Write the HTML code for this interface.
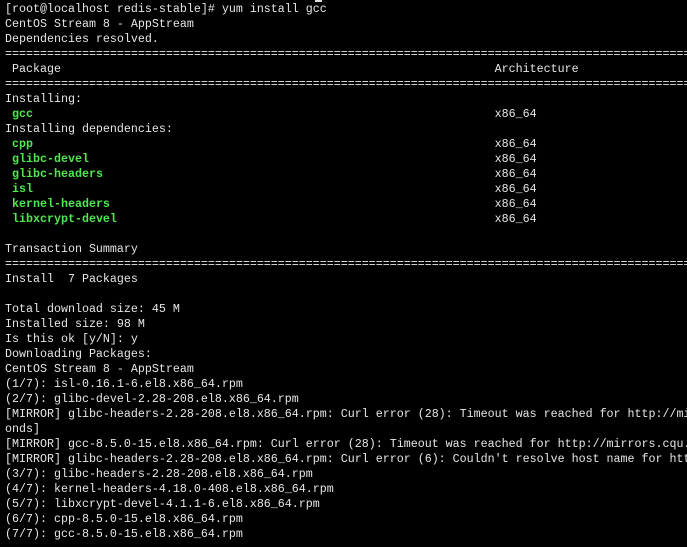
<!DOCTYPE html>
<html><head><style>
html,body{margin:0;padding:0;background:#000;width:687px;height:547px;overflow:hidden}
pre{margin:0;padding:2px 0 0 5px;font-family:"Liberation Mono",monospace;font-size:11.67px;line-height:15px;color:#e6e6e6;white-space:pre}
b{color:#4fe84f;font-weight:bold}
.c{position:absolute;left:315px;top:0;width:7px;height:2px;background:#ddd}
</style></head><body>
<pre>[root@localhost redis-stable]# yum install gcc
CentOS Stream 8 - AppStream
Dependencies resolved.
==================================================================================================
 Package                                                              Architecture
==================================================================================================
Installing:
 <b>gcc</b>                                                                  x86_64
Installing dependencies:
 <b>cpp</b>                                                                  x86_64
 <b>glibc-devel</b>                                                          x86_64
 <b>glibc-headers</b>                                                        x86_64
 <b>isl</b>                                                                  x86_64
 <b>kernel-headers</b>                                                       x86_64
 <b>libxcrypt-devel</b>                                                      x86_64

Transaction Summary
==================================================================================================
Install  7 Packages

Total download size: 45 M
Installed size: 98 M
Is this ok [y/N]: y
Downloading Packages:
CentOS Stream 8 - AppStream
(1/7): isl-0.16.1-6.el8.x86_64.rpm
(2/7): glibc-devel-2.28-208.el8.x86_64.rpm
[MIRROR] glibc-headers-2.28-208.el8.x86_64.rpm: Curl error (28): Timeout was reached for http://mi
onds]
[MIRROR] gcc-8.5.0-15.el8.x86_64.rpm: Curl error (28): Timeout was reached for http://mirrors.cqu.
[MIRROR] glibc-headers-2.28-208.el8.x86_64.rpm: Curl error (6): Couldn't resolve host name for htt
(3/7): glibc-headers-2.28-208.el8.x86_64.rpm
(4/7): kernel-headers-4.18.0-408.el8.x86_64.rpm
(5/7): libxcrypt-devel-4.1.1-6.el8.x86_64.rpm
(6/7): cpp-8.5.0-15.el8.x86_64.rpm
(7/7): gcc-8.5.0-15.el8.x86_64.rpm</pre>
<div class="c"></div>
</body></html>
